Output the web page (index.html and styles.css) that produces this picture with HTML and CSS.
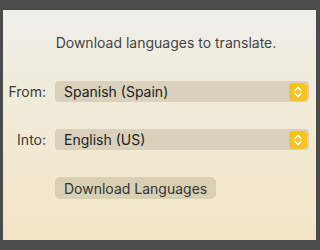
FILE: index.html
```html
<!DOCTYPE html>
<html lang="en">
<head>
    <meta charset="UTF-8">
    <title>Translate</title>
    <link rel="stylesheet" href="styles.css">
</head>
<body>
    <div class="panel">
        <p class="intro">Download languages to translate.</p>

        <div class="form">
            <label class="label">From:</label>
            <div class="picker">
                <span>Spanish (Spain)</span>
                <span class="stepper">
                    <svg width="10" height="14" viewBox="0 0 10 14"><path d="M2 5.5 L5 2.5 L8 5.5 M2 8.5 L5 11.5 L8 8.5" fill="none" stroke="#fff" stroke-width="1.6" stroke-linecap="round" stroke-linejoin="round"/></svg>
                </span>
            </div>

            <label class="label">Into:</label>
            <div class="picker">
                <span>English (US)</span>
                <span class="stepper">
                    <svg width="10" height="14" viewBox="0 0 10 14"><path d="M2 5.5 L5 2.5 L8 5.5 M2 8.5 L5 11.5 L8 8.5" fill="none" stroke="#fff" stroke-width="1.6" stroke-linecap="round" stroke-linejoin="round"/></svg>
                </span>
            </div>

            <span></span>
            <div class="actions">
                <button class="download">Download Languages</button>
            </div>
        </div>
    </div>
</body>
</html>
```

FILE: styles.css
```css
body {
    margin: 0;
    background: #4b4b4b;
    font-family: 'Inter', 'Open Sans', sans-serif;
    color: #2a2a2a;
}

.panel {
    margin: 10px 4px 10px 3px;
    height: 230px;
    box-sizing: border-box;
    background: linear-gradient(180deg, #eeeeec 0%, #f0ecde 25%, #f3e6c6 100%);
    padding-top: 24px;
}

.intro {
    margin: 0;
    text-align: center;
    font-size: 14px;
    color: #444;
    padding-left: 13px;
    line-height: 17px;
}

.form {
    display: grid;
    grid-template-columns: 43px 1fr;
    column-gap: 9px;
    row-gap: 27px;
    align-items: center;
    margin-top: 30px;
    padding-right: 7px;
}

.label {
    text-align: right;
    font-size: 14px;
    color: #3a3a3a;
}

.picker {
    height: 21px;
    border-radius: 4px;
    background: #d9d1bb;
    display: flex;
    align-items: center;
    justify-content: space-between;
    padding: 0 2px 0 9px;
    font-size: 14px;
    color: #222;
}

.stepper {
    width: 18px;
    height: 18px;
    border-radius: 4px;
    background: #f5c41e;
    display: flex;
    align-items: center;
    justify-content: center;
}

.download {
    height: 22px;
    border: none;
    border-radius: 5px;
    background: #d9d0b3;
    padding: 0 9px;
    font-family: 'Inter', 'Open Sans', sans-serif;
    font-size: 14px;
    color: #333;
}
```
